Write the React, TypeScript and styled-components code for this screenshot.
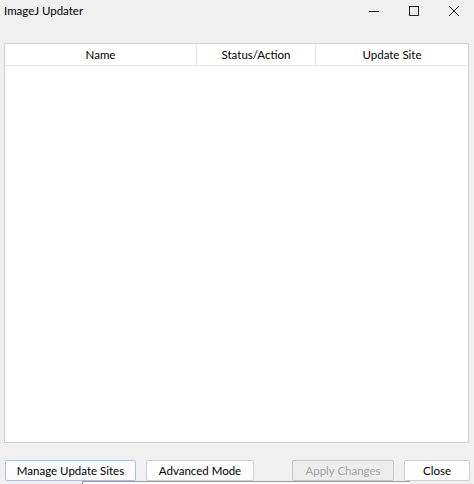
import styled, { createGlobalStyle } from 'styled-components';

const GlobalStyle = createGlobalStyle`
  html, body {
    margin: 0;
    padding: 0;
    background: #f0f0f0;
  }
  * {
    box-sizing: border-box;
  }
`;

const Window = styled.div`
  width: 474px;
  height: 484px;
  display: flex;
  flex-direction: column;
  background: #f0f0f0;
  font-family: Lato, 'Noto Sans', sans-serif;
  font-size: 11.5px;
  color: #000;
  overflow: hidden;
`;

const TitleBar = styled.div`
  height: 30px;
  flex-shrink: 0;
  display: flex;
  align-items: flex-start;
  justify-content: space-between;
`;

const Title = styled.div`
  padding: 4px 0 0 4px;
  color: #000;
`;

const Controls = styled.div`
  display: flex;
`;

const ControlButton = styled.div`
  width: 40px;
  height: 22px;
  display: flex;
  align-items: center;
  justify-content: center;
`;

const Table = styled.div`
  flex-shrink: 0;
  margin: 13px 5px 0 4px;
  height: 400px;
  background: #fff;
  border: 1px solid #cfcfcf;
  display: flex;
  flex-direction: column;
`;

const HeaderRow = styled.div`
  display: grid;
  grid-template-columns: 192px 119px 1fr;
  height: 22px;
  border-bottom: 1px solid #e3e3e3;
`;

const HeaderCell = styled.div<{ $last?: boolean }>`
  display: flex;
  align-items: center;
  justify-content: center;
  border-right: ${({ $last }) => ($last ? 'none' : '1px solid #e3e3e3')};
`;

const ButtonRow = styled.div`
  flex-shrink: 0;
  display: flex;
  align-items: center;
  padding: 17px 4px 0 5px;
`;

const Button = styled.div<{ $width: number; $gap?: number; $focused?: boolean; $disabled?: boolean }>`
  width: ${({ $width }) => $width}px;
  height: 21px;
  margin-left: ${({ $gap }) => $gap ?? 0}px;
  display: flex;
  align-items: center;
  justify-content: center;
  border-radius: 2px;
  background: ${({ $disabled }) => ($disabled ? '#ededed' : '#fdfdfd')};
  border: 1px solid
    ${({ $focused, $disabled }) =>
      $focused ? '#a9c1dc' : $disabled ? '#c6c6c6' : '#d0d0d0'};
  color: ${({ $disabled }) => ($disabled ? '#a3a3a3' : '#000')};
`;

const PopupEdge = styled.div`
  flex-shrink: 0;
  margin-left: 82px;
  width: 328px;
  height: 3px;
  background: #fafafa;
  border-top: 1px solid #9a9a9a;
  border-left: 1px solid #9a9a9a;
`;

export default function App() {
  return (
    <>
      <GlobalStyle />
      <Window>
        <TitleBar>
          <Title>ImageJ Updater</Title>
          <Controls>
            <ControlButton>
              <svg width="12" height="12" viewBox="0 0 12 12">
                <path d="M1 6.5h10" stroke="#222" strokeWidth="1" />
              </svg>
            </ControlButton>
            <ControlButton>
              <svg width="12" height="12" viewBox="0 0 12 12">
                <rect x="1.5" y="1.5" width="9" height="9" fill="none" stroke="#222" strokeWidth="1" />
              </svg>
            </ControlButton>
            <ControlButton>
              <svg width="12" height="12" viewBox="0 0 12 12">
                <path d="M1 1l10 10M11 1L1 11" stroke="#222" strokeWidth="1" />
              </svg>
            </ControlButton>
          </Controls>
        </TitleBar>
        <Table>
          <HeaderRow>
            <HeaderCell>Name</HeaderCell>
            <HeaderCell>Status/Action</HeaderCell>
            <HeaderCell $last>Update Site</HeaderCell>
          </HeaderRow>
        </Table>
        <ButtonRow>
          <Button $width={131} $focused>Manage Update Sites</Button>
          <Button $width={108} $gap={10}>Advanced Mode</Button>
          <Button $width={102} $gap={38} $disabled>Apply Changes</Button>
          <Button $width={66} $gap={10}>Close</Button>
        </ButtonRow>
        <PopupEdge />
      </Window>
    </>
  );
}
